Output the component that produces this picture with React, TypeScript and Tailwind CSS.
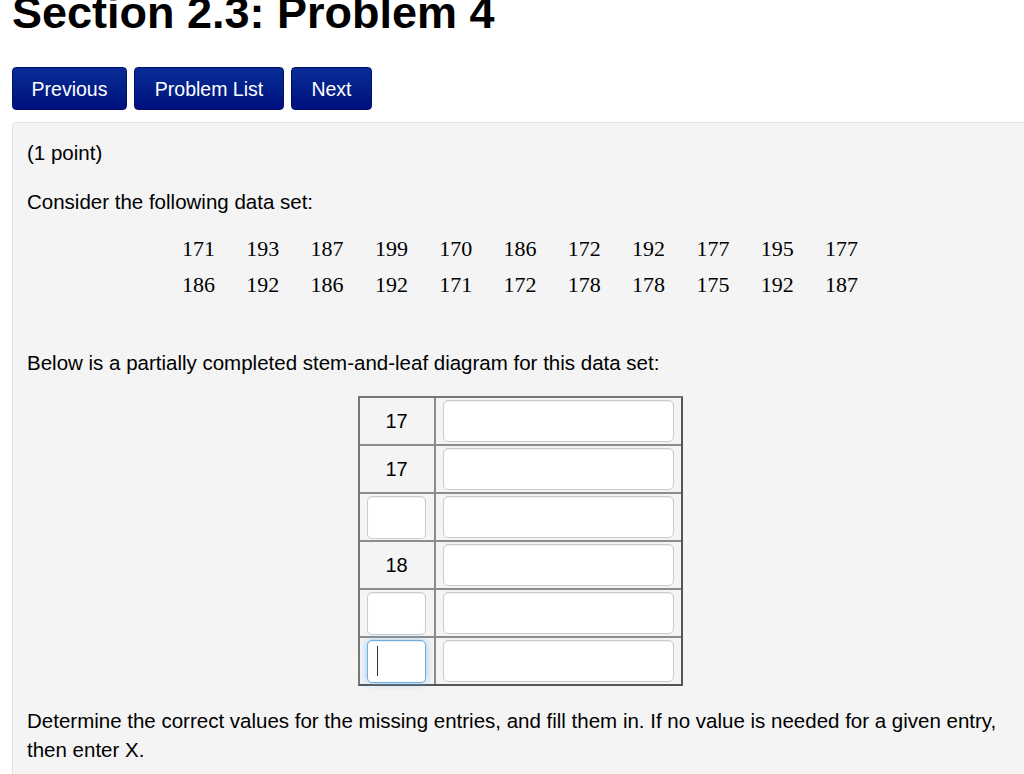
import React from "react";

const row1 = ["171", "193", "187", "199", "170", "186", "172", "192", "177", "195", "177"];
const row2 = ["186", "192", "186", "192", "171", "172", "178", "178", "175", "192", "187"];

const inputBase =
  "block bg-white border border-[#cccccc] rounded-[5px] shadow-[inset_0_1px_1px_rgba(0,0,0,0.075)] outline-none";

function LeafInput() {
  return <input type="text" readOnly className={`${inputBase} w-[231px] h-[42px]`} />;
}

function StemInput({ focused }: { focused?: boolean }) {
  if (focused) {
    return (
      <div className="relative">
        <input
          type="text"
          readOnly
          className="block w-[59px] h-[43px] bg-white border border-[#66afe9] rounded-[5px] shadow-[inset_0_1px_1px_rgba(0,0,0,0.075),0_0_8px_rgba(102,175,233,0.6)] outline-none"
        />
        <span className="absolute left-[10px] top-[6px] w-px h-[30px] bg-[#333]" />
      </div>
    );
  }
  return <input type="text" readOnly className={`${inputBase} w-[59px] h-[43px]`} />;
}

type Row = { stem?: string; focused?: boolean };
const rows: Row[] = [{ stem: "17" }, { stem: "17" }, {}, { stem: "18" }, {}, { focused: true }];

export default function App() {
  return (
    <div className="w-[1024px] h-[774px] overflow-hidden bg-white text-black font-['Liberation_Sans',Arial,sans-serif]">
      <h1 className="ml-[12px] mt-[-10px] text-[45px] leading-none font-bold whitespace-nowrap">
        Section 2.3: Problem 4
      </h1>

      <div className="ml-[12px] mt-[32px] flex gap-[7px]">
        {[
          ["Previous", "w-[115px]"],
          ["Problem List", "w-[150px]"],
          ["Next", "w-[81px]"],
        ].map(([label, w]) => (
          <button
            key={label}
            className={`${w} h-[43px] flex items-center justify-center rounded-[4px] border border-[#001066] bg-gradient-to-b from-[#0a2c96] to-[#00107e] text-white text-[19.5px] leading-none pt-[2px]`}
          >
            {label}
          </button>
        ))}
      </div>

      <div className="ml-[12px] mt-[12px] w-[1040px] h-[700px] bg-[#f4f4f4] border border-[#e2e2e2] rounded-[4px] pl-[14px] pt-[15px] text-[20.5px]">
        <p className="leading-[29px]">(1 point)</p>
        <p className="leading-[29px] mt-[20px]">Consider the following data set:</p>

        <div className="ml-[155px] mt-[15px] font-['Liberation_Serif','Times_New_Roman',serif] text-[22px] leading-[36px]">
          {[row1, row2].map((r, i) => (
            <div key={i} className="flex">
              {r.map((n, j) => (
                <span key={j} className="w-[64.3px] shrink-0">
                  {n}
                </span>
              ))}
            </div>
          ))}
        </div>

        <p className="leading-[29px] mt-[45px]">
          Below is a partially completed stem-and-leaf diagram for this data set:
        </p>

        <div className="ml-[331px] mt-[19px] w-[325px] border-2 border-t-[#777] border-l-[#777] border-r-[#555] border-b-[#555]">
          {rows.map((r, i) => (
            <div key={i} className={`flex h-[46px] ${i > 0 ? "border-t-2 border-[#8c8c8c] h-[48px]" : ""}`}>
              <div className="w-[74px] flex items-center justify-center pl-[7px] pr-[8px]">
                {r.stem ? (
                  <span className="text-[20px]">{r.stem}</span>
                ) : (
                  <StemInput focused={r.focused} />
                )}
              </div>
              <div className="w-[2px] bg-[#8c8c8c]" />
              <div className="flex-1 flex items-center pl-[7px]">
                <LeafInput />
              </div>
            </div>
          ))}
        </div>

        <p className="mt-[20px] w-[985px] leading-[29px]">
          Determine the correct values for the missing entries, and fill them in. If no value is needed for a given entry, then enter X.
        </p>
      </div>
    </div>
  );
}
